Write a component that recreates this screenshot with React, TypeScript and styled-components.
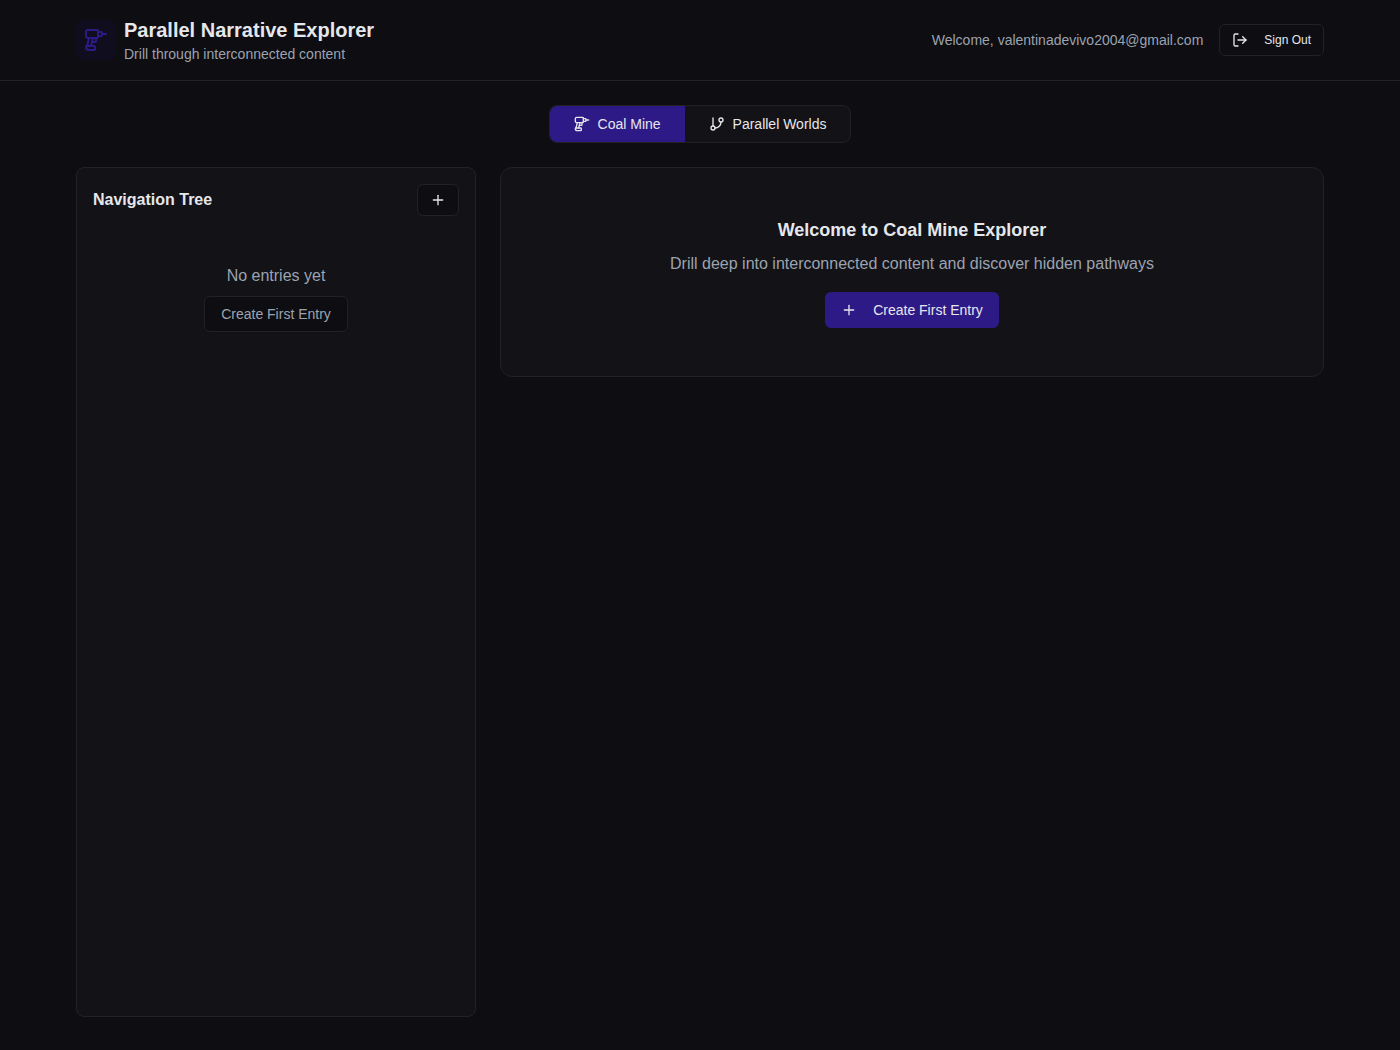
import React from "react";
import styled, { createGlobalStyle, css } from "styled-components";
import { LogOut, Plus } from "lucide-react";

const GlobalStyle = createGlobalStyle`
  *, *::before, *::after { box-sizing: border-box; }
  body {
    margin: 0;
    background: #0d0d12;
    color: #e5e7eb;
    font-family: "Liberation Sans", Arial, sans-serif;
    font-size: 16px;
    line-height: 24px;
  }
  h1, h2, h3, p { margin: 0; }
`;

const Page = styled.div`
  min-height: 100vh;
`;

const Header = styled.header`
  border-bottom: 1px solid #222226;
`;

const HeaderInner = styled.div`
  display: flex;
  align-items: center;
  justify-content: space-between;
  width: 1248px;
  height: 80px;
  margin: 0 auto;
`;

const Brand = styled.div`
  display: flex;
  align-items: center;
  gap: 8px;
`;

const LogoTile = styled.div`
  display: flex;
  padding: 8px;
  border-radius: 8px;
  background: #100e1e;
  color: #2e1a87;
`;

const StrokeIcon = styled.svg.attrs({ viewBox: "0 0 24 24" })`
  flex: none;
  fill: none;
  stroke: currentColor;
  stroke-width: 2;
  stroke-linecap: round;
  stroke-linejoin: round;
`;

const AppTitle = styled.h1`
  font-size: 20px;
  line-height: 28px;
  font-weight: 700;
`;

const Muted = styled.p<{ $small?: boolean }>`
  color: #9ca3af;
  font-size: ${({ $small }) => ($small ? 14 : 16)}px;
  line-height: ${({ $small }) => ($small ? 20 : 24)}px;
`;

const Account = styled.div`
  display: flex;
  align-items: center;
  gap: 16px;
`;

const Button = styled.button<{ $size?: "sm" | "md"; $primary?: boolean; $muted?: boolean }>`
  display: inline-flex;
  align-items: center;
  justify-content: center;
  gap: 16px;
  height: 36px;
  padding: 0 16px;
  border: 1px solid #222226;
  border-radius: 6px;
  background: #0d0d12;
  color: ${({ $muted }) => ($muted ? "#9ca3af" : "#e5e7eb")};
  font-family: inherit;
  font-size: 14px;
  line-height: 20px;
  ${({ $size }) => $size === "sm" && css`
    height: 32px;
    padding: 0 12px;
    font-size: 12px;
    line-height: 16px;
  `}
  ${({ $primary }) => $primary && css`
    border: 0;
    background: #2e1a87;
  `}
`;

const Main = styled.main`
  width: 1248px;
  margin: 0 auto;
  padding: 24px 0 33px;
`;

const Tabs = styled.div`
  display: flex;
  width: fit-content;
  margin: 0 auto 24px;
  border: 1px solid #222226;
  border-radius: 8px;
  overflow: hidden;
  background: #121217;
`;

const Tab = styled.button<{ $active?: boolean }>`
  display: flex;
  align-items: center;
  gap: 8px;
  height: 36px;
  padding: 0 24px;
  border: 0;
  background: ${({ $active }) => ($active ? "#2e1a87" : "transparent")};
  color: #e5e7eb;
  font-family: inherit;
  font-size: 14px;
  line-height: 20px;
`;

const Columns = styled.div`
  display: grid;
  grid-template-columns: 400px 1fr;
  align-items: start;
  gap: 24px;
`;

const TreePanel = styled.aside`
  height: 850px;
  padding: 16px;
  border: 1px solid #222226;
  border-radius: 8px;
  background: #121217;
`;

const PanelHeader = styled.div`
  display: flex;
  align-items: center;
  justify-content: space-between;
`;

const PanelTitle = styled.h3`
  font-size: 16px;
  line-height: 24px;
  font-weight: 700;
`;

const EmptyTree = styled.div`
  display: flex;
  flex-direction: column;
  align-items: center;
  gap: 8px;
  padding-top: 48px;
`;

const WelcomeCard = styled.section`
  display: flex;
  flex-direction: column;
  align-items: center;
  height: 210px;
  padding-top: 48px;
  border: 1px solid #222226;
  border-radius: 12px;
  background: #121217;
`;

const WelcomeTitle = styled.h2`
  margin-bottom: 8px;
  font-size: 18px;
  line-height: 28px;
  font-weight: 700;
`;

const WelcomeText = styled(Muted)`
  margin-bottom: 16px;
`;

function DrillIcon({ size }: { size: number }) {
  return (
    <StrokeIcon width={size} height={size}>
      <path d="M14 9c0 .6-.4 1-1 1H4c-1.1 0-2-.9-2-2V4c0-1.1.9-2 2-2h9c.6 0 1 .4 1 1Z" />
      <path d="M18 6h4" />
      <path d="M14 4h3a1 1 0 0 1 1 1v2a1 1 0 0 1-1 1h-3" />
      <path d="m5 10-2 8" />
      <path d="M12 10v3c0 .6-.4 1-1 1H8" />
      <path d="m7 18 2-8" />
      <path d="M5 22c-1.7 0-3-1.3-3-3 0-.6.4-1 1-1h7c.6 0 1 .4 1 1v2c0 .6-.4 1-1 1Z" />
    </StrokeIcon>
  );
}

function BranchIcon({ size }: { size: number }) {
  return (
    <StrokeIcon width={size} height={size}>
      <path d="M6 3v12" />
      <circle cx="18" cy="6" r="3" />
      <circle cx="6" cy="18" r="3" />
      <path d="M18 9a9 9 0 0 1-9 9" />
    </StrokeIcon>
  );
}

export default function App() {
  return (
    <Page>
      <GlobalStyle />
      <Header>
        <HeaderInner>
          <Brand>
            <LogoTile><DrillIcon size={24} /></LogoTile>
            <div>
              <AppTitle>Parallel Narrative Explorer</AppTitle>
              <Muted $small>Drill through interconnected content</Muted>
            </div>
          </Brand>
          <Account>
            <Muted $small>Welcome, valentinadevivo2004@gmail.com</Muted>
            <Button $size="sm"><LogOut size={16} />Sign Out</Button>
          </Account>
        </HeaderInner>
      </Header>
      <Main>
        <Tabs>
          <Tab $active><DrillIcon size={16} />Coal Mine</Tab>
          <Tab><BranchIcon size={16} />Parallel Worlds</Tab>
        </Tabs>
        <Columns>
          <TreePanel>
            <PanelHeader>
              <PanelTitle>Navigation Tree</PanelTitle>
              <Button $size="sm" aria-label="Add entry"><Plus size={16} /></Button>
            </PanelHeader>
            <EmptyTree>
              <Muted>No entries yet</Muted>
              <Button $muted>Create First Entry</Button>
            </EmptyTree>
          </TreePanel>
          <WelcomeCard>
            <WelcomeTitle>Welcome to Coal Mine Explorer</WelcomeTitle>
            <WelcomeText>Drill deep into interconnected content and discover hidden pathways</WelcomeText>
            <Button $primary><Plus size={16} />Create First Entry</Button>
          </WelcomeCard>
        </Columns>
      </Main>
    </Page>
  );
}
